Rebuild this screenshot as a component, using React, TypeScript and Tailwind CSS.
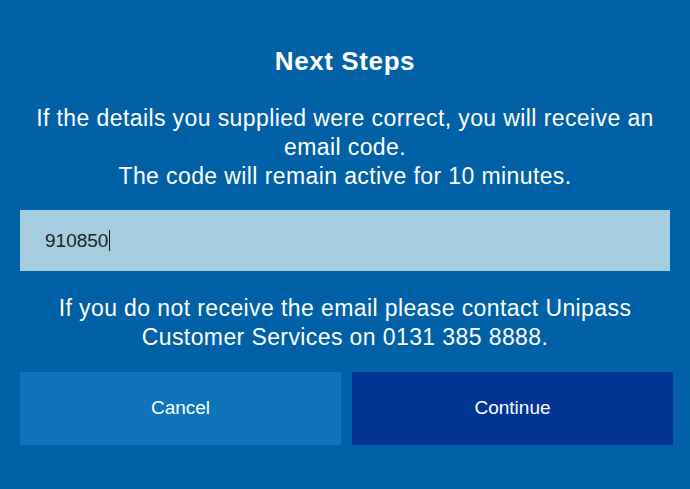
import React from 'react';

export default function App() {
  return (
    <div className="min-h-screen w-full bg-[#0061a7] font-['Liberation_Sans',Arial,sans-serif] text-white">
      <div className="flex flex-col px-5 pt-[46px]">
        <h1 className="text-center text-[26px] font-bold leading-[30px] tracking-[0.6px]">Next Steps</h1>
        <p className="mt-[28px] w-[650px] text-center text-[23px] leading-[29px] tracking-[0.4px]">
          If the details you supplied were correct, you will receive an email code.
          <br />
          The code will remain active for 10 minutes.
        </p>
        <div className="mt-[19px] flex h-[61px] w-[650px] items-center bg-[#a5cde0] pl-[25px]">
          <span className="text-[19px] leading-[22px] text-[#222]">910850</span>
          <span className="ml-px h-[21px] w-px bg-[#111]" />
        </div>
        <p className="mt-[23px] w-[650px] text-center text-[23px] leading-[29px] tracking-[0.4px]">
          If you do not receive the email please contact Unipass Customer Services on 0131 385 8888.
        </p>
        <div className="mt-[20px] flex w-[653px] gap-[11px]">
          <button className="h-[73px] flex-1 bg-[#0f74b9] text-[19px] text-white">Cancel</button>
          <button className="h-[73px] flex-1 bg-[#003594] text-[19px] text-white">Continue</button>
        </div>
      </div>
    </div>
  );
}
